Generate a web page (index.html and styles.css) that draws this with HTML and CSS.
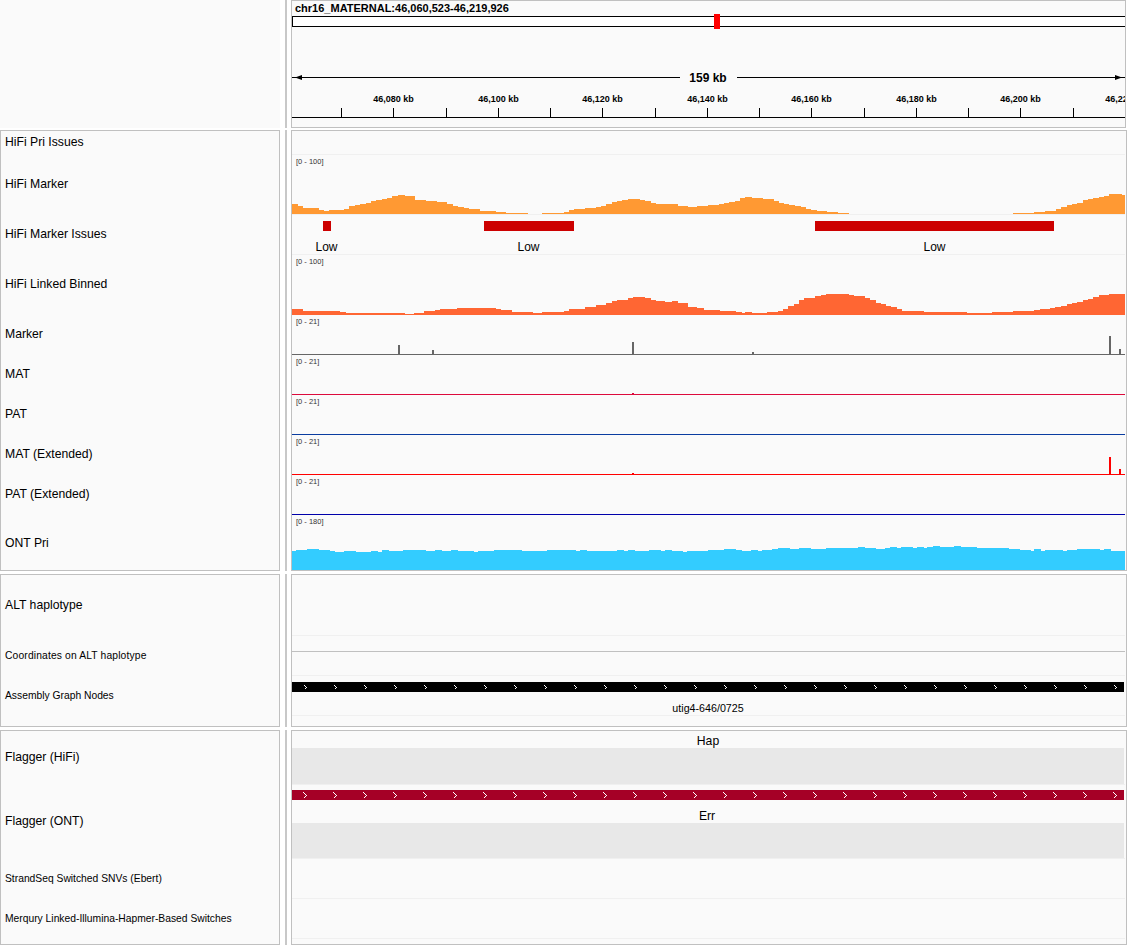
FILE: index.html
```html
<!DOCTYPE html>
<html lang="en">
<head>
<meta charset="utf-8">
<title>IGV tracks</title>
<link rel="stylesheet" href="styles.css">
</head>
<body>
<main class="board">
  <section class="row row-head">
    <div class="names names-head"></div>
    <div class="divider"></div>
    <div class="view view-head">
      <svg class="ruler" width="833" height="126" viewBox="292 1 833 126">
        <text class="chr" x="295" y="12">chr16_MATERNAL:46,060,523-46,219,926</text>
        <rect class="ideogram" x="292.5" y="16.5" width="840" height="10"/>
        <rect class="band" x="714" y="14" width="6" height="15"/>
        <path class="ink" d="M292 77.5H680M737 77.5H1125M292 117.5H1125"/>
        <path class="ink" d="M341.5 108V117M393.5 108V117M446.5 108V117M498.5 108V117M550.5 108V117M602.5 108V117M655.5 108V117M707.5 108V117M759.5 108V117M811.5 108V117M864.5 108V117M916.5 108V117M968.5 108V117M1020.5 108V117M1073.5 108V117"/>
        <polygon class="head" points="295,77.5 302,75 302,80"/>
        <polygon class="head" points="1122,77.5 1115,75 1115,80"/>
        <text class="span" x="708" y="82">159 kb</text>
        <text class="tick" x="393.5" y="102">46,080 kb</text>
        <text class="tick" x="498.5" y="102">46,100 kb</text>
        <text class="tick" x="602.5" y="102">46,120 kb</text>
        <text class="tick" x="707.5" y="102">46,140 kb</text>
        <text class="tick" x="811.5" y="102">46,160 kb</text>
        <text class="tick" x="916.5" y="102">46,180 kb</text>
        <text class="tick" x="1020.5" y="102">46,200 kb</text>
        <text class="tick" x="1125.5" y="102">46,220 kb</text>
      </svg>
    </div>
  </section>

  <section class="row row-data">
    <div class="names">
      <div class="name h24">HiFi Pri Issues</div>
      <div class="name h60">HiFi Marker</div>
      <div class="name h40">HiFi Marker Issues</div>
      <div class="name h60">HiFi Linked Binned</div>
      <div class="name h40">Marker</div>
      <div class="name h40">MAT</div>
      <div class="name h40">PAT</div>
      <div class="name h40">MAT (Extended)</div>
      <div class="name h40">PAT (Extended)</div>
      <div class="name name-low h55">ONT Pri</div>
    </div>
    <div class="divider"></div>
    <div class="view">
      <div class="track h24"></div>
      <div class="track h60">
        <span class="range">[0 - 100]</span>
        <svg class="chart" width="833" height="59" viewBox="36 75 2499 177">
          <path class="orange" d="M36 252V222H54V227H69V234H117V240H132V243H147V240H192V237H207V228H225V225H240V222H258V219H273V213H288V210H306V207H321V204H336V198H354V195H375V197H405V209H438V213H471V216H501V222H519V228H534V231H552V234H567V237H600V242H648V245H678V248H744V252H786V249H852V246H867V240H882V237H915V234H948V231H963V228H978V222H996V216H1011V213H1026V210H1044V207H1080V209H1095V212H1113V218H1128V222H1194V228H1224V231H1251V228H1260V252Z"/>
          <path class="orange" transform="translate(1260)" d="M0 252V228H24V225H57V222H72V219H87V216H105V213H120V204H135V201H156V204H189V207H222V213H237V219H252V222H267V225H285V228H303V231H318V237H333V240H351V243H381V245H414V248H447V252H939V249H1002V246H1035V243H1068V237H1083V231H1101V225H1116V222H1131V219H1149V210H1164V207H1179V204H1197V201H1212V198H1227V192H1266V195H1275V252Z"/>
        </svg>
      </div>
      <div class="track h40">
        <svg class="chart" width="833" height="39" viewBox="292 215 833 39">
          <rect class="issue" x="323" y="221" width="8" height="10"/>
          <rect class="issue" x="484" y="221" width="90" height="10"/>
          <rect class="issue" x="815" y="221" width="239" height="10"/>
          <text class="feature" x="326.5" y="251">Low</text>
          <text class="feature" x="528.5" y="251">Low</text>
          <text class="feature" x="934.5" y="251">Low</text>
        </svg>
      </div>
      <div class="track h60 open">
        <span class="range">[0 - 100]</span>
        <svg class="chart" width="833" height="60" viewBox="36 375 2499 180">
          <path class="coral" d="M36 555V537H69V543H180V546H198V549H375V552H402V549H432V543H465V540H480V537H531V534H648V537H663V540H696V546H759V549H786V546H852V543H867V537H915V531H948V525H978V519H996V513H1011V510H1044V504H1059V501H1095V503H1113V510H1128V513H1155V516H1176V513H1194V519H1224V531H1251V534H1260V555Z"/>
          <path class="coral" transform="translate(1260)" d="M0 555V534H12V540H60V543H108V546H126V549H135V546H156V549H201V546H234V543H249V537H264V528H282V522H297V510H312V504H345V498H363V495H378V492H447V495H462V498H495V504H510V510H528V519H543V522H558V528H573V531H591V537H606V543H672V546H801V549H876V546H939V543H1002V540H1020V537H1050V534H1065V531H1083V528H1101V522H1116V519H1131V516H1149V510H1164V507H1179V501H1197V495H1227V492H1275V555Z"/>
        </svg>
      </div>
      <div class="track h40 base-grey">
        <span class="range">[0 - 21]</span>
        <svg class="chart" width="833" height="39" viewBox="292 315 833 39">
          <path class="spike-grey" d="M398 345h2v9h-2zM432 350h2v4h-2zM632 342h2v12h-2zM752 352h2v2h-2zM1109 336h2v18h-2zM1119 349h2v5h-2z"/>
        </svg>
      </div>
      <div class="track h40 base-crimson">
        <span class="range">[0 - 21]</span>
        <svg class="chart" width="833" height="39" viewBox="292 355 833 39">
          <path class="spike-crimson" d="M632 393h2v1h-2z"/>
        </svg>
      </div>
      <div class="track h40 base-blue">
        <span class="range">[0 - 21]</span>
      </div>
      <div class="track h40 base-red">
        <span class="range">[0 - 21]</span>
        <svg class="chart" width="833" height="39" viewBox="292 435 833 39">
          <path class="spike-red" d="M632 473h2v1h-2zM1109 457h2v17h-2zM1119 469h2v5h-2z"/>
        </svg>
      </div>
      <div class="track h40 base-navy">
        <span class="range">[0 - 21]</span>
      </div>
      <div class="track h55 open">
        <span class="range">[0 - 180]</span>
        <svg class="chart" width="833" height="55" viewBox="36 495 2499 165">
          <path class="sky" d="M36 660V603H48V600H81V597H117V600H150V603H165V606H192V603H228V606H273V603H294V606H306V600H327V603H369V600H438V603H465V600H486V603H513V600H534V603H582V606H594V603H642V600H726V603H801V600H888V603H900V600H921V603H1011V600H1032V603H1044V600H1065V603H1107V600H1143V603H1155V600H1176V603H1209V606H1221V603H1260V660Z"/>
          <path class="sky" transform="translate(1260)" d="M0 660V603H24V600H72V597H108V600H126V603H153V600H174V603H186V600H216V597H234V594H270V597H297V594H333V597H378V594H474V591H495V594H528V597H555V594H570V591H591V594H603V591H639V594H651V591H672V594H681V591H699V588H720V591H762V588H783V591H831V594H927V597H960V600H993V603H1002V597H1023V603H1035V600H1089V603H1101V600H1131V597H1200V600H1212V597H1233V603H1275V660Z"/>
        </svg>
      </div>
    </div>
  </section>

  <section class="row row-alt">
    <div class="names">
      <div class="name name-even h61">ALT haplotype</div>
      <div class="name small spaced h40">Coordinates on ALT haplotype</div>
      <div class="name small h40">Assembly Graph Nodes</div>
    </div>
    <div class="divider"></div>
    <div class="view">
      <div class="track h61"></div>
      <div class="track h40"><div class="coord-line"></div></div>
      <div class="track h40">
        <svg class="node node-graph" width="832" height="10">
          <defs>
            <pattern id="chev-small" width="30" height="10" patternUnits="userSpaceOnUse">
              <path class="chev" d="M12.5 3.5L14.5 5.5L12.5 7.5"/>
            </pattern>
          </defs>
          <rect class="fill-black" width="832" height="10"/>
          <rect width="832" height="10" fill="url(#chev-small)"/>
        </svg>
        <div class="feature-name node-name">utig4-646/0725</div>
      </div>
    </div>
  </section>

  <section class="row row-flag">
    <div class="names">
      <div class="name h54">Flagger (HiFi)</div>
      <div class="name h74">Flagger (ONT)</div>
      <div class="name small h40">StrandSeq Switched SNVs (Ebert)</div>
      <div class="name small h40">Merqury Linked-Illumina-Hapmer-Based Switches</div>
    </div>
    <div class="divider"></div>
    <div class="view">
      <div class="track h54">
        <div class="block-name hap">Hap</div>
        <div class="block block-hap"></div>
      </div>
      <div class="track h74">
        <svg class="node node-flag" width="832" height="10">
          <defs>
            <pattern id="chev-large" width="30" height="10" patternUnits="userSpaceOnUse">
              <path class="chev" d="M11.5 2.5L14.5 5.5L11.5 8.5"/>
            </pattern>
          </defs>
          <rect class="fill-wine" width="832" height="10"/>
          <rect width="832" height="10" fill="url(#chev-large)"/>
        </svg>
        <div class="block-name err">Err</div>
        <div class="block block-err"></div>
      </div>
      <div class="track h40"></div>
      <div class="track h40"></div>
    </div>
  </section>
</main>
</body>
</html>
```
FILE: styles.css
```css
* { box-sizing: border-box; }

html, body {
  margin: 0;
  padding: 0;
  background: #fff;
}

body {
  width: 1143px;
  height: 945px;
  overflow: hidden;
  font-family: "Liberation Sans", Arial, sans-serif;
  color: #000;
}

.board {
  display: flex;
  flex-direction: column;
}

.row { display: flex; }
.row-head { height: 128px; }
.row-data { height: 441px; margin-top: 2px; }
.row-alt { height: 153px; margin-top: 3px; }
.row-flag { height: 215px; margin-top: 3px; }

.names {
  width: 280px;
  background: #fafafa;
  border: 1px solid #c0c0c0;
}
.names-head { border: 0; }

.divider {
  width: 2px;
  margin: 0 4px 0 5px;
  background: #c8c8c8;
}

.view {
  width: 836px;
  padding-right: 1px;
  background: #fafafa;
  border: 1px solid #c0c0c0;
}
.view-head {
  width: 835px;
  padding-right: 0;
}

.name {
  display: flex;
  align-items: center;
  padding: 0 0 2px 4px;
  font-size: 12.2px;
  white-space: nowrap;
}
.name-low { padding: 1px 0 0 4px; }
.name-even { padding-bottom: 1px; }
.name.small {
  padding-bottom: 1px;
  font-size: 10.3px;
}
.name.spaced { letter-spacing: 0.14px; }

.h24 { height: 24px; }
.h40 { height: 40px; }
.h54 { height: 54px; }
.h55 { height: 55px; }
.h60 { height: 60px; }
.h61 { height: 61px; }
.h74 { height: 74px; }

.track {
  display: flow-root;
  position: relative;
  border-bottom: 1px solid #f0f0f0;
}
.track.open { border-bottom: 0; }
.base-grey { border-bottom-color: #666; }
.base-crimson { border-bottom-color: #dc0a3c; }
.base-blue { border-bottom-color: #0a3ca0; }
.base-red { border-bottom-color: #f00; }
.base-navy { border-bottom-color: #00a; }

.range {
  position: absolute;
  left: 4px;
  top: 1px;
  font-size: 7.5px;
  line-height: 12px;
  color: #333;
}

svg { display: block; }
.ruler, .chart { overflow: hidden; }

.chr {
  font-size: 11px;
  font-weight: 700;
}
.span {
  font-size: 12px;
  font-weight: 700;
  text-anchor: middle;
}
.tick {
  font-size: 9px;
  font-weight: 700;
  text-anchor: middle;
}
.ideogram {
  fill: #fff;
  stroke: #000;
  stroke-width: 1;
  shape-rendering: crispEdges;
}
.band { fill: #f00; }
.ink {
  fill: none;
  stroke: #000;
  stroke-width: 1;
  shape-rendering: crispEdges;
}
.head { fill: #000; }

.orange { fill: #f93; shape-rendering: crispEdges; }
.coral { fill: #f63; shape-rendering: crispEdges; }
.sky { fill: #3cf; shape-rendering: crispEdges; }
.issue { fill: #c00; }
.spike-grey { fill: #666; }
.spike-crimson { fill: #dc0a3c; }
.spike-red { fill: #f00; }

.feature {
  font-size: 12px;
  text-anchor: middle;
}

.coord-line {
  height: 1px;
  margin-top: 15px;
  background: #c0c0c0;
}

.node-graph { margin-top: 6px; }
.node-flag { margin-top: 5px; }
.fill-black { fill: #000; }
.fill-wine { fill: #a50026; }
.chev {
  fill: none;
  stroke: #fff;
  stroke-width: 1;
  shape-rendering: crispEdges;
}

.feature-name {
  width: 832px;
  text-align: center;
}
.node-name {
  margin-top: 10px;
  font-size: 10.7px;
  line-height: 12px;
}

.block-name {
  width: 832px;
  font-size: 12.2px;
  line-height: 12px;
  text-align: center;
}
.hap { padding-top: 4px; height: 16px; }
.err { margin-top: 10px; padding-right: 2px; }

.block {
  width: 832px;
  margin-top: 1px;
  background: #e8e8e8;
}
.block-hap { height: 36px; }
.block-err { height: 35px; }
```
